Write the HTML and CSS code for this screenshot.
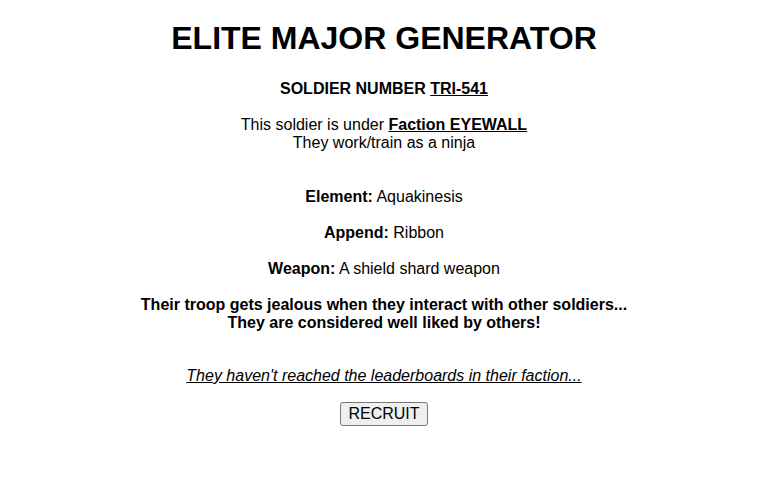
FILE: index.html
```html
<!DOCTYPE html>
<html lang="en">
<head>
    <meta charset="UTF-8">
    <meta name="viewport" content="width=device-width, initial-scale=1.0">
    <title>Elite Major Generator</title>
    <link rel="stylesheet" href="styles.css">
</head>
<body>
    <div class="generator">
        <h1>ELITE MAJOR GENERATOR</h1>

        <p class="soldier-number">SOLDIER NUMBER <span class="tag">TRI-541</span></p>

        <p class="faction">
            This soldier is under <span class="faction-name">Faction EYEWALL</span><br>
            They work/train as a ninja
        </p>

        <div class="stats">
            <p><b>Element:</b> Aquakinesis</p>
            <p><b>Append:</b> Ribbon</p>
            <p><b>Weapon:</b> A shield shard weapon</p>
        </div>

        <p class="traits">
            Their troop gets jealous when they interact with other soldiers...<br>
            They are considered well liked by others!
        </p>

        <p class="rank"><a href="#">They haven't reached the leaderboards in their faction...</a></p>

        <button type="button" class="recruit">RECRUIT</button>
    </div>
</body>
</html>
```

FILE: styles.css
```css
body {
    margin: 8px;
    font-family: "Liberation Sans", Arial, sans-serif;
    font-size: 16px;
    line-height: 18px;
    color: #000;
    background-color: #ffffff;
}

.generator {
    text-align: center;
}

.generator h1 {
    font-size: 32px;
    line-height: 37px;
    margin: 12px 0 23px;
}

.generator p {
    margin: 18px 0;
}

.soldier-number {
    font-weight: bold;
}

.tag,
.faction-name {
    text-decoration: underline;
}

.faction-name {
    font-weight: bold;
}

.faction {
    margin-bottom: 36px !important;
}

.traits {
    font-weight: bold;
    margin-bottom: 35px !important;
}

.rank a {
    color: #000;
    font-style: italic;
}

.recruit {
    font-family: "Liberation Sans", Arial, sans-serif;
    font-size: 16px;
    line-height: 18px;
    padding: 2px 7.5px;
    margin-top: -1px;
    color: #000;
    background-color: #efefef;
    border: 1px solid #767676;
    border-radius: 3px;
    cursor: pointer;
}

.recruit:hover {
    background-color: #e5e5e5;
}
```
